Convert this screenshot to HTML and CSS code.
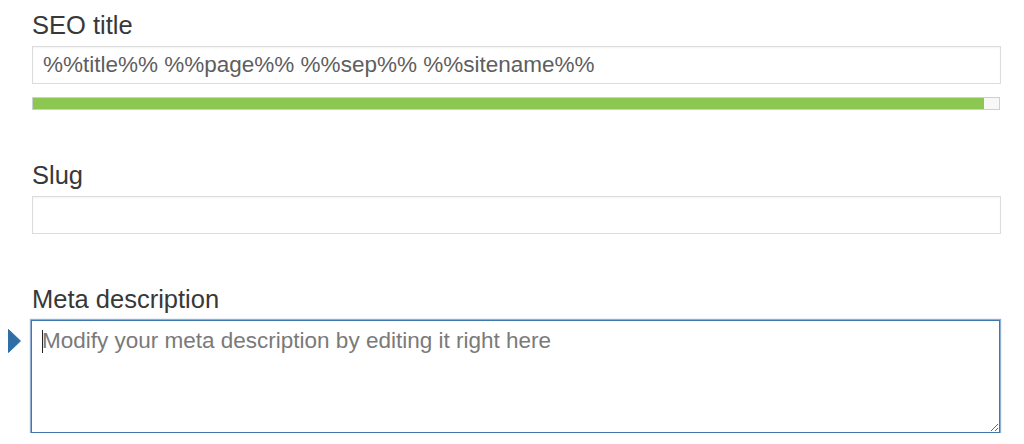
FILE: index.html
```html
<!DOCTYPE html>
<html lang="en">
<head>
<meta charset="utf-8">
<title>SEO fields</title>
<link rel="stylesheet" href="styles.css">
</head>
<body>
<form class="seo-form">
  <div class="field">
    <label class="field-label" for="seo-title">SEO title</label>
    <input class="text-input" id="seo-title" type="text" value="%%title%% %%page%% %%sep%% %%sitename%%">
    <div class="progress"><div class="progress-fill" style="width: 98.4%"></div></div>
  </div>
  <div class="field">
    <label class="field-label" for="slug">Slug</label>
    <input class="text-input" id="slug" type="text" value="">
  </div>
  <div class="field">
    <label class="field-label" for="meta">Meta description</label>
    <div class="textarea-wrap">
      <svg class="pointer" width="13" height="24" viewBox="0 0 13 24" aria-hidden="true"><path d="M0.5 0.5 L12.5 12 L0.5 23.5 Z" fill="#2f6ea7" stroke="#2f6ea7" stroke-linejoin="round"/></svg>
      <textarea class="text-area focused" id="meta" placeholder="Modify your meta description by editing it right here"></textarea>
      <span class="caret"></span>
    </div>
  </div>
</form>
</body>
</html>
```

FILE: styles.css
```css
html, body {
  margin: 0;
  padding: 0;
  background: #ffffff;
}

body {
  font-family: "Liberation Sans", Arial, Helvetica, sans-serif;
  color: #3c3c3c;
}

.seo-form {
  width: 969px;
  padding: 10px 0 0 32px;
  display: flex;
  flex-direction: column;
}

.field {
  display: flex;
  flex-direction: column;
  margin-bottom: 50px;
}

.field:last-child {
  margin-bottom: 0;
}

.field-label {
  font-size: 25.5px;
  line-height: 30px;
  color: #383838;
  margin-bottom: 6px;
}

.text-input {
  box-sizing: border-box;
  width: 969px;
  height: 38px;
  margin: 0;
  padding: 0 10px;
  border: 1px solid #dcdcdc;
  box-shadow: inset 0 1px 2px rgba(0, 0, 0, 0.05);
  font-family: "Liberation Sans", Arial, Helvetica, sans-serif;
  font-size: 22.5px;
  color: #5e5e5e;
  background: #fff;
  outline: none;
}

.progress {
  box-sizing: border-box;
  width: 968px;
  height: 13px;
  margin-top: 13px;
  border: 1px solid #cfcfcf;
  background: #f7f7f7;
  display: flex;
}

.progress-fill {
  height: 100%;
  background: #8cc751;
}

.textarea-wrap {
  position: relative;
  display: flex;
}

.pointer {
  position: absolute;
  left: -24px;
  top: 9px;
}

.text-area {
  box-sizing: border-box;
  width: 969px;
  height: 113px;
  margin: 0 0 0 -1px;
  padding: 7px 10px;
  border: 1px solid #3f78ad;
  box-shadow: 0 0 1px 1px rgba(70, 125, 180, 0.6);
  font-family: "Liberation Sans", Arial, Helvetica, sans-serif;
  font-size: 22.5px;
  color: #555;
  background: #fff;
  resize: both;
  outline: none;
}

.text-area::placeholder {
  color: #7a7a7a;
  opacity: 1;
}

.caret {
  position: absolute;
  left: 10px;
  top: 10px;
  width: 1px;
  height: 23px;
  background: #222;
}
```
